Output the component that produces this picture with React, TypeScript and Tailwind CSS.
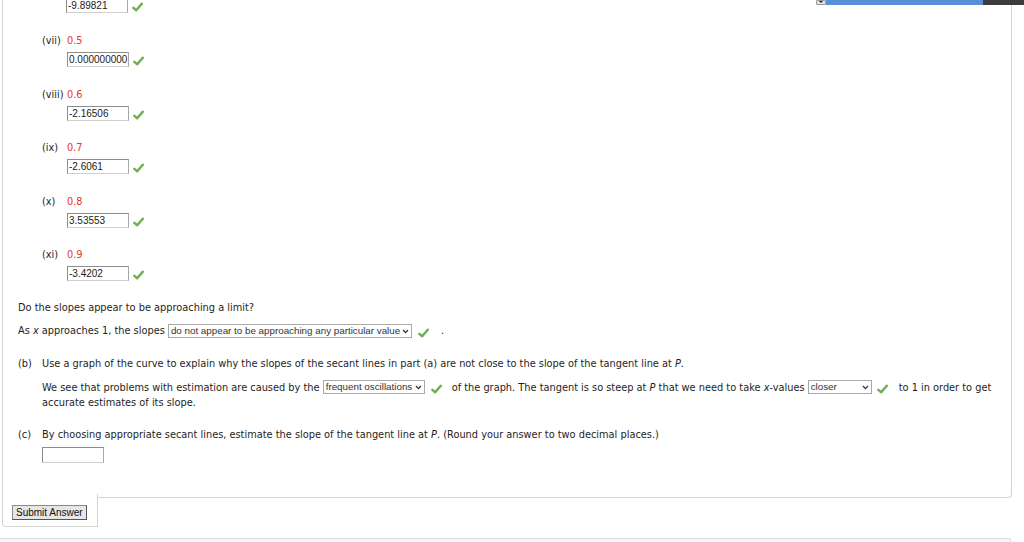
import React from "react";

const Check = () => (
  <svg width="11" height="10" viewBox="0 0 11 10" className="block shrink-0">
    <path d="M1.4 5.9 L4.2 8.3 L9.8 1.8" fill="none" stroke="#6fb052" strokeWidth="2.5" strokeLinecap="round" strokeLinejoin="round" />
  </svg>
);

const Answer = ({ value }: { value: string }) => (
  <div className="flex items-center h-[15px]">
    <div className="w-[62px] h-[15px] border border-t-[#8c8c8c] border-l-[#8c8c8c] border-b-[#d0d0d0] border-r-[#a8a8a8] bg-white pl-[1px] text-[10px] leading-[13px] text-[#222] font-['Liberation_Sans',Arial,sans-serif] overflow-hidden whitespace-nowrap">
      {value}
    </div>
    <span className="flex ml-[4px] mt-[3px]">
      <Check />
    </span>
  </div>
);

const Part = ({ label, x, value }: { label: string; x: string; value: string }) => (
  <div className="flex flex-col">
    <div className="flex h-[12px] leading-[12px] pl-[39px]">
      <span className="min-w-[25px] pr-[2px]">{label}</span>
      <span className="text-[#e2362e]">{x}</span>
    </div>
    <div className="pl-[64px] mt-[5px]">
      <Answer value={value} />
    </div>
  </div>
);

const Dropdown = ({ value, width }: { value: string; width: string }) => (
  <span
    className={`inline-flex items-center justify-between h-[14px] border border-[#a9a9a9] bg-white pl-[2px] pr-[2px] text-[9.8px] leading-[12px] text-[#333] font-['Liberation_Sans',Arial,sans-serif] ${width}`}
  >
    <span className="whitespace-nowrap">{value}</span>
    <svg width="7" height="5" viewBox="0 0 7 5" className="ml-[2px] shrink-0">
      <path d="M1 1 L3.5 3.6 L6 1" fill="none" stroke="#333" strokeWidth="1.3" />
    </svg>
  </span>
);

const parts = [
  { label: "(vii)", x: "0.5", value: "0.000000000" },
  { label: "(viii)", x: "0.6", value: "-2.16506" },
  { label: "(ix)", x: "0.7", value: "-2.6061" },
  { label: "(x)", x: "0.8", value: "3.53553" },
  { label: "(xi)", x: "0.9", value: "-3.4202" },
];

export default function App() {
  return (
    <div className="relative w-[1024px] h-[542px] overflow-hidden bg-white text-[9.8px] text-[#1e1e1e] font-['DejaVu_Sans',Verdana,sans-serif]">
      {/* fixed toolbar strip over the top right */}
      <div className="absolute top-0 right-0 flex h-[5px]">
        <div className="w-[10px] h-[5px] bg-[#e4e4e4] border border-[#999] rounded-[1px] flex items-start justify-center">
          <div className="w-0 h-0 border-l-[2px] border-r-[2px] border-t-[2px] border-l-transparent border-r-transparent border-t-[#222]" />
        </div>
        <div className="w-[157px] bg-[#5a8fd8]" />
        <div className="w-[41px] bg-[#3c3c3c]" />
      </div>

      <div className="ml-[2px] w-[1010px] border-l border-r border-[#d4d4d4] h-[494px] flex flex-col">
        <div className="pl-[63px] -mt-[2px]">
          <Answer value="-9.89821" />
        </div>
        <div className="flex flex-col gap-[21.5px] mt-[22px]">
          {parts.map((p) => (
            <Part key={p.label} label={p.label} x={p.x} value={p.value} />
          ))}
        </div>

        <div className="pl-[15px] mt-[21px] leading-[12px]">Do the slopes appear to be approaching a limit?</div>
        <div className="pl-[15px] mt-[10px] flex items-center h-[14px] whitespace-nowrap">
          <span>
            As <i>x</i> approaches 1, the slopes&nbsp;
          </span>
          <Dropdown value="do not appear to be approaching any particular value" width="w-[244px]" />
          <span className="flex ml-[6px] mt-[3px]">
            <Check />
          </span>
          <span className="ml-[12px]">.</span>
        </div>

        <div className="pl-[15px] mt-[20px] flex leading-[12px]">
          <span className="w-[24px]">(b)</span>
          <span>
            Use a graph of the curve to explain why the slopes of the secant lines in part (a) are not close to the slope of the tangent line at <i>P</i>.
          </span>
        </div>
        <div className="pl-[39px] mt-[10px] leading-[15px]">
          <div className="flex items-center h-[14px] whitespace-nowrap">
            <span>We see that problems with estimation are caused by the&nbsp;</span>
            <Dropdown value="frequent oscillations" width="w-[102px]" />
            <span className="flex ml-[6px] mt-[3px]">
              <Check />
            </span>
            <span className="ml-[10px]">
              of the graph. The tangent is so steep at <i>P</i> that we need to take <i>x</i>-values&nbsp;
            </span>
            <Dropdown value="closer" width="w-[64px]" />
            <span className="flex ml-[5px] mt-[3px]">
              <Check />
            </span>
            <span className="ml-[11px]">to 1 in order to get</span>
          </div>
          <div className="mt-[1px]">accurate estimates of its slope.</div>
        </div>

        <div className="pl-[15px] mt-[19px] flex leading-[12px]">
          <span className="w-[24px]">(c)</span>
          <span>
            By choosing appropriate secant lines, estimate the slope of the tangent line at <i>P</i>. (Round your answer to two decimal places.)
          </span>
        </div>
        <div className="pl-[39px] mt-[6px]">
          <div className="w-[62px] h-[16px] border border-t-[#8c8c8c] border-l-[#8c8c8c] border-b-[#d0d0d0] border-r-[#a8a8a8] bg-white" />
        </div>
      </div>

      <div className="ml-[2px] w-[1010px] flex items-start">
        <div className="w-[96px] h-[33px] border-l border-r border-b border-[#d4d4d4] rounded-bl-[4px] pl-[9px] pt-[11px]">
          <button className="h-[15px] px-[3px] bg-[#e6e6e6] border border-t-[#8a8a8a] border-l-[#8a8a8a] border-r-[#555] border-b-[#555] text-[10px] leading-[12px] text-[#111] font-['Liberation_Sans',Arial,sans-serif] whitespace-nowrap">
            Submit Answer
          </button>
        </div>
        <div className="flex-1 h-[4px] border-r border-b border-[#d4d4d4] rounded-br-[4px]" />
      </div>

      <div className="mt-[11px] w-[1011px] h-[20px] border-t border-r border-[#dcdcdc] bg-[#f6f6f6] rounded-tr-[2px]" />
    </div>
  );
}
